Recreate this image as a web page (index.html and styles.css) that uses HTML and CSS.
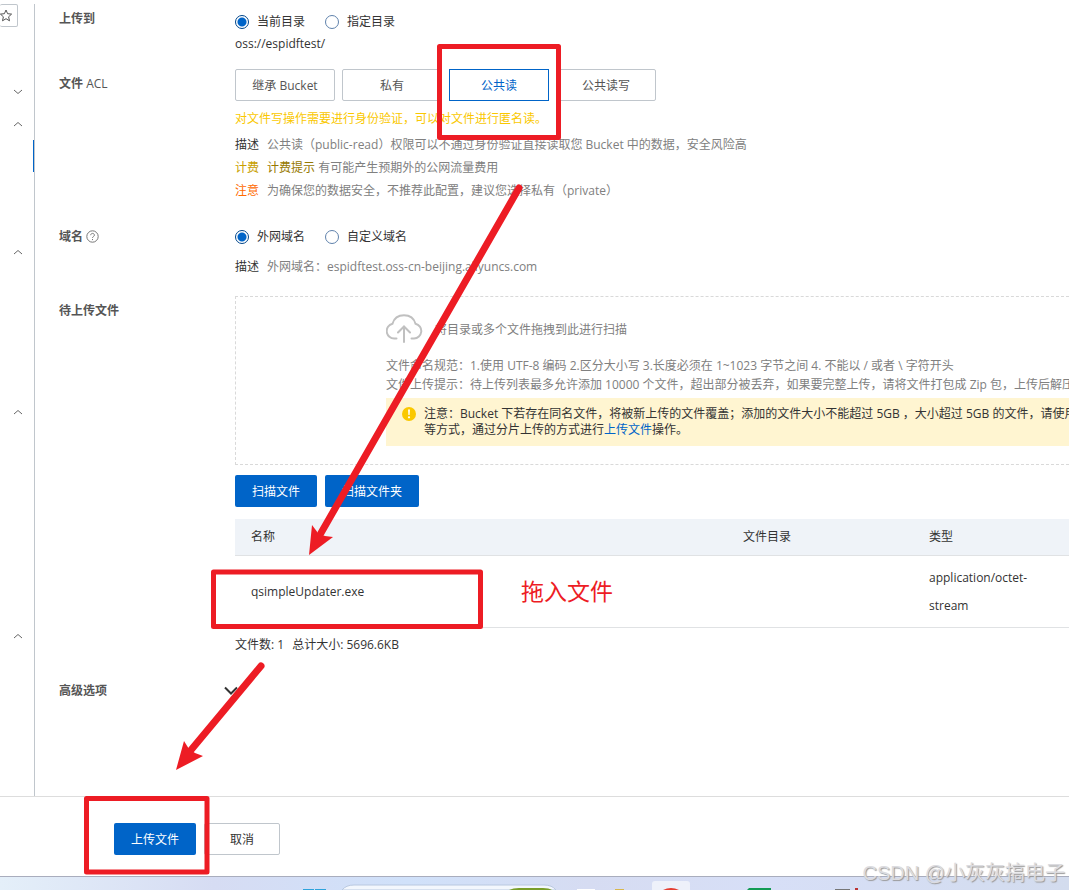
FILE: index.html
```html
<!DOCTYPE html>
<html lang="zh-CN">
<head>
    <meta charset="UTF-8">
    <meta name="viewport" content="width=device-width, initial-scale=1.0">
    <title>上传文件</title>
    <link rel="stylesheet" href="styles.css">
</head>
<body>
    <div class="page">
        <nav class="sidebar">
            <button class="star-btn" aria-label="收藏">
                <svg width="14" height="14" viewBox="0 0 14 14"><path d="M6 1l1.600 3.700 4 .4-3 2.700.9 4L6 9.700l-3.500 2.100.9-4-3-2.700 4-.4z"/></svg>
            </button>
            <ul class="side-list">
                <li><button class="fold" aria-label="展开"><svg width="10" height="6" viewBox="0 0 10 6"><path d="M1 1l4 3.500 4-3.500"/></svg></button></li>
                <li><button class="fold" aria-label="收起"><svg width="10" height="6" viewBox="0 0 10 6"><path d="M1 5l4-3.500 4 3.500"/></svg></button></li>
                <li class="active"></li>
                <li></li>
                <li></li>
                <li><button class="fold" aria-label="收起"><svg width="10" height="6" viewBox="0 0 10 6"><path d="M1 5l4-3.500 4 3.500"/></svg></button></li>
                <li></li>
                <li></li>
                <li></li>
                <li></li>
                <li><button class="fold" aria-label="收起"><svg width="10" height="6" viewBox="0 0 10 6"><path d="M1 5l4-3.500 4 3.500"/></svg></button></li>
                <li></li>
                <li></li>
                <li></li>
                <li></li>
                <li></li>
                <li></li>
                <li><button class="fold" aria-label="收起"><svg width="10" height="6" viewBox="0 0 10 6"><path d="M1 5l4-3.500 4 3.500"/></svg></button></li>
            </ul>
        </nav>

        <main class="form">
            <div class="row">
                <div class="row-label">上传到</div>
                <div class="row-body target">
                    <div class="radios">
                        <label><input type="radio" name="dir" checked>当前目录</label>
                        <label><input type="radio" name="dir">指定目录</label>
                    </div>
                    <div class="path">oss://espidftest/</div>
                </div>
            </div>

            <div class="row row-lg">
                <div class="row-label">文件 <span>ACL</span></div>
                <div class="row-body">
                    <div class="acl">
                        <button>继承 Bucket</button>
                        <button>私有</button>
                        <button class="selected">公共读</button>
                        <button>公共读写</button>
                    </div>
                    <p class="hint">对文件写操作需要进行身份验证，可以对文件进行匿名读。</p>
                    <p class="desc"><b>描述</b>公共读（public-read）权限可以不通过身份验证直接读取您 Bucket 中的数据，安全风险高</p>
                    <p class="desc"><b class="fee">计费</b><a href="#">计费提示</a> 有可能产生预期外的公网流量费用</p>
                    <p class="desc"><b class="warn">注意</b>为确保您的数据安全，不推荐此配置，建议您选择私有（private）</p>
                </div>
            </div>

            <div class="row">
                <div class="row-label">域名
                    <svg class="help" width="13" height="13" viewBox="0 0 13 13"><circle cx="6.500" cy="6.500" r="5.700"/><path d="M4.700 5.200c0-2.400 3.700-2.400 3.700 0 0 1.300-1.900 1.300-1.900 2.700M6.500 9v1.100"/></svg>
                </div>
                <div class="row-body domain">
                    <div class="radios">
                        <label><input type="radio" name="domain" checked>外网域名</label>
                        <label><input type="radio" name="domain">自定义域名</label>
                    </div>
                    <p class="desc"><b>描述</b>外网域名：espidftest.oss-cn-beijing.aliyuncs.com</p>
                </div>
            </div>

            <div class="row row-lg">
                <div class="row-label">待上传文件</div>
                <div class="row-body">
                    <div class="dropzone">
                        <div class="drop-title">
                            <svg width="38" height="30" viewBox="0 0 38 30"><path d="M10.500 25.500H8.500A7.500 7.500 0 0 1 6.500 10.700C8 5.500 12.500 2.300 18 2.300S28 5.500 29.500 10.700A7.500 7.500 0 0 1 28 25.500H25.500M18 29V14M12 19.500l6-6 6 6"/></svg>
                            <span>将目录或多个文件拖拽到此进行扫描</span>
                        </div>
                        <p>文件命名规范：1.使用 UTF-8 编码 2.区分大小写 3.长度必须在 1~1023 字节之间 4. 不能以 / 或者 \ 字符开头</p>
                        <p>文件上传提示：待上传列表最多允许添加 10000 个文件，超出部分被丢弃，如果要完整上传，请将文件打包成 Zip 包，上传后解压</p>
                        <div class="notice">
                            <svg width="14" height="16" viewBox="0 0 14 16"><circle cx="7" cy="8" r="7" fill="#fac800"/><path d="M6 3.500h2L7.600 9H6.400z" fill="#fff"/><circle cx="7" cy="11.300" r="1.100" fill="#fff"/></svg>
                            <div>注意：Bucket 下若存在同名文件，将被新上传的文件覆盖；添加的文件大小不能超过 5GB ，大小超过 5GB 的文件，请使用<br>等方式，通过分片上传的方式进行<a href="#">上传文件</a>操作。</div>
                        </div>
                    </div>
                    <div class="scan">
                        <button class="primary">扫描文件</button>
                        <button class="primary">扫描文件夹</button>
                    </div>
                    <table class="files">
                        <thead>
                            <tr>
                                <th>名称</th>
                                <th class="col-dir">文件目录</th>
                                <th class="col-type">类型</th>
                            </tr>
                        </thead>
                        <tbody>
                            <tr>
                                <td>qsimpleUpdater.exe</td>
                                <td></td>
                                <td>application/octet-stream</td>
                            </tr>
                        </tbody>
                    </table>
                    <div class="summary"><span>文件数: 1</span><span>总计大小: 5696.6KB</span></div>
                </div>
            </div>

            <div class="row">
                <div class="row-label">高级选项</div>
                <button class="advanced" aria-label="展开高级选项"><svg width="16" height="10" viewBox="0 0 16 10"><path d="M2 1.500l6 6 6-6"/></svg></button>
            </div>
        </main>
    </div>

    <footer class="actions">
        <button class="primary">上传文件</button>
        <button class="cancel">取消</button>
    </footer>

    <div class="taskbar">
        <svg width="1069" height="13" viewBox="0 0 1069 13">
            <path d="M303 12h11v1h-11zM315 12h11v1h-11z" fill="#2ea3dc"/>
            <path d="M342 13q4-5 12-5h190q8 0 12 5z" fill="#f3f7fd" stroke="#b9c8e0"/>
            <path d="M509 13q4-2 10-2h24q6 0 9 2z" fill="#7a9e2a"/>
            <path d="M577 12h18v1h-18z" fill="#fff"/>
            <path d="M615 12h9v1h-9z" fill="#d8b74d"/>
            <rect x="652" y="4" width="38" height="14" rx="3" fill="#eef1fa"/>
            <path d="M663 13q8-4 16 0z" fill="#e43d30"/>
            <path d="M749 11h22v2h-24z" fill="#139b54"/>
            <path d="M835 12h15v1h-15z" fill="#777"/>
            <path d="M855 11h3v2h-3z" fill="#b33"/>
        </svg>
    </div>

    <!-- tutorial marks drawn over the page -->
    <svg class="marks" width="1069" height="890" viewBox="0 0 1069 890">
        <g class="box">
            <rect x="439.500" y="46.500" width="119" height="91"/>
            <rect x="213.500" y="572" width="267" height="54.500"/>
            <rect x="86.500" y="798.500" width="120.500" height="73.500"/>
        </g>
        <path class="shaft" d="M519 188L321 533"/>
        <path class="head" d="M309 555l3-30 6 8 7 3 8 1z"/>
        <path class="shaft" d="M261 666L191 750"/>
        <path class="head" d="M176 770l8-29 5 8 6 4 8 3z"/>
        <text x="521" y="600">拖入文件</text>
    </svg>
    <div class="watermark">CSDN @小灰灰搞电子</div>
</body>
</html>
```
FILE: styles.css
```css
* {
    box-sizing: border-box;
}
body {
    position: relative;
    margin: 0;
    min-height: 100vh;
    display: flex;
    flex-direction: column;
    overflow-x: hidden;
    font-family: "Open Sans", "Noto Sans CJK SC", sans-serif;
    font-size: 12px;
    color: #333;
    background: #fff;
}
p {
    margin: 0;
}
a {
    color: #0064c8;
    text-decoration: none;
}
button {
    font: inherit;
    color: #333;
    padding: 0;
    border: 1px solid #c0c6cc;
    border-radius: 2px;
    background: #fff;
    cursor: pointer;
}
svg {
    flex: none;
    fill: none;
}

.page {
    flex: 1;
    display: flex;
}

/* collapsed side menu */
.sidebar {
    width: 35px;
    margin-top: 4px;
    border-right: 1px solid #c0c6cc;
}
.star-btn {
    display: flex;
    align-items: center;
    width: 18px;
    height: 23px;
    border-left: 0;
}
.star-btn path {
    stroke: #555;
}
.side-list {
    list-style: none;
    margin: 49px 0 0;
    padding: 0;
}
.side-list li {
    height: 32px;
    padding-left: 2px;
    display: flex;
    align-items: center;
    justify-content: center;
}
.side-list .active {
    border-right: 1px solid #0064c8;
}
.fold {
    display: flex;
    border: 0;
}
.fold path {
    stroke: #666;
}

/* form rows */
.form {
    flex: 1;
    min-width: 0;
    padding: 4px 0 0 24px;
}
.row {
    display: flex;
    margin-bottom: 14px;
}
.row-lg {
    margin-bottom: 20px;
}
.row-label {
    flex: none;
    width: 176px;
    line-height: 30px;
    font-weight: bold;
    color: #555;
}
.row-label span {
    font-weight: normal;
}
.row-body {
    flex: 1;
    min-width: 0;
}
.help {
    vertical-align: -2px;
}
.help circle,
.help path {
    stroke: #777;
}
.radios {
    display: flex;
    gap: 20px;
    line-height: 22px;
}
.radios label {
    display: flex;
    align-items: center;
    gap: 8px;
}
.radios input {
    appearance: none;
    width: 14px;
    height: 14px;
    margin: 0;
    border: 1px solid #5f82ac;
    border-radius: 50%;
}
.radios input:checked {
    border-color: #00458a;
    background: radial-gradient(circle, #0064c8 4px, #fff 5px);
}
.target {
    padding-top: 7px;
}
.path {
    line-height: 22px;
}
.domain .radios,
.domain .desc {
    line-height: 30px;
}
.acl {
    display: flex;
    gap: 7px;
    margin-bottom: 6px;
}
.acl button {
    width: 100px;
    height: 32px;
    color: #555;
}
.acl .selected {
    color: #0064c8;
    border-color: #0064c8;
    border-radius: 0;
}
.hint {
    margin-bottom: 3px;
    line-height: 23px;
    color: #fac800;
}
.desc {
    line-height: 23px;
    color: #808080;
}
.desc b {
    margin-right: 8px;
    font-weight: normal;
    color: #333;
}
.desc .fee {
    color: #c8a000;
}
.desc .warn {
    color: #ff6a00;
}
.desc a {
    color: #967800;
}

/* drop area */
.dropzone {
    height: 169px;
    padding: 16px 0 0 150px;
    border: 1px dashed #d9d9d9;
    border-right: 0;
    overflow: hidden;
    white-space: nowrap;
    color: #808080;
}
.dropzone p {
    line-height: 19px;
}
.drop-title {
    display: flex;
    gap: 11px;
    height: 34px;
    margin-bottom: 9px;
    line-height: 34px;
}
.drop-title path {
    stroke: #c0c0c0;
    stroke-width: 2;
    stroke-linecap: round;
}
.notice {
    display: flex;
    gap: 8px;
    margin-top: 4px;
    padding: 8px 0 8px 16px;
    line-height: 16px;
    color: #333;
    background: #fff5d1;
}
.scan {
    display: flex;
    gap: 8px;
    margin: 10px 0 12px;
}
.primary {
    height: 32px;
    padding: 0 17px;
    border: 0;
    color: #fff;
    background: #0064c8;
}

/* file list */
.files {
    width: 100%;
    table-layout: fixed;
    border-collapse: collapse;
}
.files th,
.files td {
    padding: 8px 16px 7px;
    border-bottom: 1px solid #e0e2e4;
    line-height: 28px;
    text-align: left;
    font-weight: normal;
}
.files th {
    padding: 4px 16px;
    background: #eff3f8;
}
.col-dir {
    width: 186px;
}
.col-type {
    width: 156px;
}
.summary {
    display: flex;
    gap: 8px;
    margin-top: 6px;
    line-height: 22px;
}
.advanced {
    display: flex;
    align-items: center;
    height: 30px;
    margin-left: -12px;
    border: 0;
}
.advanced path {
    stroke: #333;
    stroke-width: 2;
}

.actions {
    display: flex;
    gap: 8px;
    padding: 26px 114px 21px;
    border-top: 1px solid #ddd;
}
.cancel {
    width: 76px;
}
.taskbar {
    height: 14px;
    overflow: hidden;
    border-top: 1px solid #a9adbd;
    background: linear-gradient(90deg, #e4eff9, #d6dcf3 20%, #d0e1fa 38%, #d6dcf2 55%, #d7dff7 72%, #d3dcee);
}

/* marks */
.marks {
    position: absolute;
    top: 0;
    left: 0;
    pointer-events: none;
}
.box rect,
.shaft {
    stroke: #ed1c24;
    stroke-width: 5;
    stroke-linejoin: round;
    stroke-linecap: round;
}
.shaft {
    stroke-width: 7;
}
.head,
.marks text {
    fill: #ed1c24;
}
.marks text {
    font-size: 23px;
}
.watermark {
    position: absolute;
    right: 4px;
    bottom: 2px;
    font-family: "Liberation Sans", "Noto Sans CJK SC", sans-serif;
    font-size: 20px;
    line-height: 30px;
    color: #dcdce0;
    text-shadow: 1px 1px 1px #999;
    pointer-events: none;
}
```
